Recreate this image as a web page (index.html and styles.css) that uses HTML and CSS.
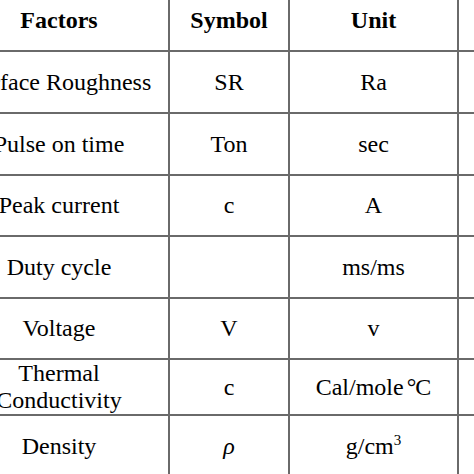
FILE: index.html
```html
<!DOCTYPE html>
<html>
<head>
<meta charset="utf-8">
<link rel="stylesheet" href="styles.css">
</head>
<body>
<table class="params">
  <colgroup>
    <col class="c-factor">
    <col class="c-symbol">
    <col class="c-unit">
    <col class="c-extra">
  </colgroup>
  <tr class="r62">
    <th>Factors</th><th>Symbol</th><th>Unit</th><th></th>
  </tr>
  <tr class="r62">
    <td>Surface Roughness</td><td>SR</td><td>Ra</td><td></td>
  </tr>
  <tr class="r62">
    <td>Pulse on time</td><td>Ton</td><td>sec</td><td></td>
  </tr>
  <tr class="r61">
    <td>Peak current</td><td>c</td><td>A</td><td></td>
  </tr>
  <tr class="r62">
    <td>Duty cycle</td><td></td><td>ms/ms</td><td></td>
  </tr>
  <tr class="r61">
    <td>Voltage</td><td>V</td><td>v</td><td></td>
  </tr>
  <tr class="r57">
    <td class="two-line">Thermal<br>Conductivity</td><td>c</td><td>Cal/mole<span class="deg">°</span>C</td><td></td>
  </tr>
  <tr class="r62">
    <td>Density</td><td><span class="rho">ρ</span></td><td>g/cm<sup>3</sup></td><td></td>
  </tr>
</table>
</body>
</html>
```

FILE: styles.css
```css
html, body {
  margin: 0;
  padding: 0;
  background: #ffffff;
  overflow: hidden;
}

.params {
  border-collapse: collapse;
  table-layout: fixed;
  margin-left: -52px;
  margin-top: -12px;
  width: 630px;
  font-family: "Liberation Serif", "Times New Roman", serif;
  font-size: 24px;
  line-height: 1.2;
  color: #000000;
}

.c-factor { width: 220px; }
.c-symbol { width: 120px; }
.c-unit { width: 169px; }
.c-extra { width: 121px; }

.params th,
.params td {
  border: 2px solid #6a6a6a;
  padding: 0;
  text-align: center;
  vertical-align: middle;
}

.params th {
  font-weight: bold;
}

.r62 { height: 62px; }
.r61 { height: 61px; }
.r57 { height: 56px; }

.params .two-line {
  line-height: 27px;
}

.rho {
  font-style: italic;
}

.deg {
  margin-left: 3px;
  margin-right: -1px;
}

.params sup {
  font-size: 15px;
  line-height: 0;
  vertical-align: 9px;
}
```
